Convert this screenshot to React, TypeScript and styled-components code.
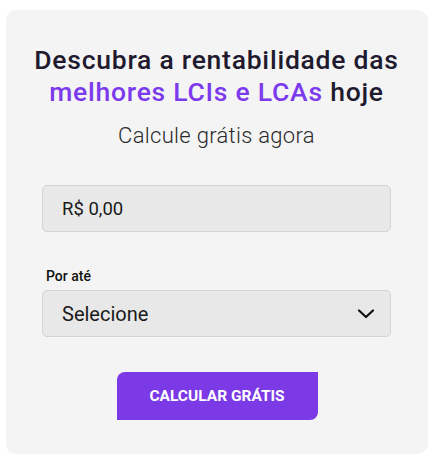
import React from "react";
import styled, { createGlobalStyle } from "styled-components";

const Global = createGlobalStyle`
  html, body { margin: 0; padding: 0; background: #ffffff; }
  body { font-family: Roboto, "Noto Sans", Arial, sans-serif; }
  * { box-sizing: border-box; }
`;

const Page = styled.div`
  padding: 10px 5px 10px 6px;
`;

const Card = styled.section`
  width: 422px;
  height: 444px;
  background: #f4f4f4;
  border-radius: 10px;
  padding: 34px 37px 0 36px;
  display: flex;
  flex-direction: column;
`;

const Title = styled.h1`
  margin: 0 -10px;
  text-align: center;
  font-family: Roboto, sans-serif;
  font-weight: 500;
  font-size: 26.5px;
  line-height: 32px;
  color: #1f1a2e;
  letter-spacing: 0.75px;
`;

const Accent = styled.span`
  color: #7c3aed;
`;

const Subtitle = styled.p`
  margin: 14px 0 0;
  text-align: center;
  font-family: Roboto, sans-serif;
  font-weight: 300;
  font-size: 22px;
  line-height: 28px;
  color: #2a2a2a;
  letter-spacing: 0.3px;
`;

const Field = styled.div<{ $mt: number }>`
  margin-top: ${(p) => p.$mt}px;
  display: flex;
  flex-direction: column;
`;

const Label = styled.label`
  font-family: Roboto, sans-serif;
  font-weight: 500;
  font-size: 14px;
  line-height: 18px;
  color: #111;
  margin: 0 0 5px 4px;
`;

const Box = styled.div<{ $size: number }>`
  height: 47px;
  background: #e8e8e8;
  border: 1px solid #d3d3d3;
  border-radius: 5px;
  display: flex;
  align-items: center;
  justify-content: space-between;
  padding: 0 15px 0 19px;
  font-family: Roboto, sans-serif;
  font-size: ${(p) => p.$size}px;
  color: #1a1a1a;
`;

const ButtonRow = styled.div`
  margin-top: 35px;
  display: flex;
  justify-content: center;
  padding-left: 1px;
`;

const Button = styled.button`
  width: 201px;
  height: 48px;
  border: none;
  background: #7b3ae6;
  color: #ffffff;
  border-radius: 8px 0 8px 0;
  font-family: Roboto, sans-serif;
  font-weight: 700;
  font-size: 15.5px;
  letter-spacing: 0px;
  text-transform: uppercase;
  cursor: pointer;
`;

const Chevron = () => (
  <svg width="18" height="10" viewBox="0 0 18 10" fill="none">
    <path d="M2 1.5 L9 8 L16 1.5" stroke="#111" strokeWidth="2.2" strokeLinecap="round" strokeLinejoin="round" />
  </svg>
);

export default function App() {
  return (
    <Page>
      <Global />
      <Card>
        <Title>
          Descubra a rentabilidade das <Accent>melhores LCIs e LCAs</Accent> hoje
        </Title>
        <Subtitle>Calcule grátis agora</Subtitle>
        <Field $mt={35}>
          <Box $size={18.5}>R$ 0,00</Box>
        </Field>
        <Field $mt={35}>
          <Label>Por até</Label>
          <Box $size={20}>
            <span>Selecione</span>
            <Chevron />
          </Box>
        </Field>
        <ButtonRow>
          <Button>Calcular grátis</Button>
        </ButtonRow>
      </Card>
    </Page>
  );
}
